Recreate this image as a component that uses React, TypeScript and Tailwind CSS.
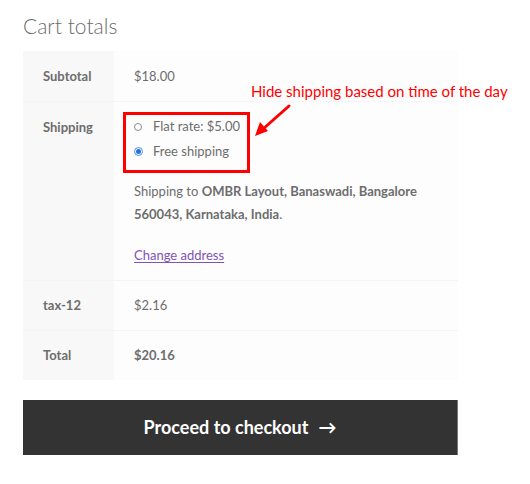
import React from "react";

export default function App() {
  const font = { fontFamily: "Lato, 'Noto Sans', sans-serif" };
  return (
    <div className="relative w-[530px] h-[484px] bg-white" style={font}>
      <div className="pl-[23px] pt-[9px] w-[458px]">
        <h2 className="text-[21px] leading-[34px] font-light text-[#6d6d6d] mb-[8px]">Cart totals</h2>
        <div className="text-[13px] text-[#6d6d6d]">
          <div className="flex border-b border-[#f5f5f5]">
            <div className="w-[91px] shrink-0 bg-[#f8f8f8] pl-[20px] py-[13px] leading-[24px] font-bold">Subtotal</div>
            <div className="flex-1 bg-[#fdfdfd] pl-[20px] py-[13px] leading-[24px]">$18.00</div>
          </div>
          <div className="flex border-b border-[#f5f5f5]">
            <div className="w-[91px] shrink-0 bg-[#f8f8f8] pl-[20px] py-[13px] leading-[24px] font-bold">Shipping</div>
            <div className="flex-1 bg-[#fdfdfd] pl-[20px] pt-[12px] pb-[13px]">
              <div className="relative">
                <div className="absolute left-[-11px] top-[-2px] w-[127px] h-[61px] border-[3px] border-[#ff0000]" />
                <div className="flex items-center h-[25px]">
                  <span className="w-[8px] h-[8px] rounded-full border border-[#8a8a8a] bg-white" />
                  <span className="ml-[11px]">Flat rate: $5.00</span>
                </div>
                <div className="flex items-center h-[25px]">
                  <span className="w-[9px] h-[9px] rounded-full border border-[#4a90e2] bg-white flex items-center justify-center">
                    <span className="w-[5px] h-[5px] rounded-full bg-[#1a73e8]" />
                  </span>
                  <span className="ml-[10px]">Free shipping</span>
                </div>
              </div>
              <p className="mt-[16px] leading-[23px]">
                Shipping to <strong className="font-bold">OMBR Layout, Banaswadi, Bangalore 560043, Karnataka, India</strong>.
              </p>
              <p className="mt-[18px] leading-[23px]">
                <span className="text-[#7f54b3] underline underline-offset-2">Change address</span>
              </p>
            </div>
          </div>
          <div className="flex border-b border-[#f5f5f5]">
            <div className="w-[91px] shrink-0 bg-[#f8f8f8] pl-[20px] py-[13px] leading-[23px] font-bold">tax-12</div>
            <div className="flex-1 bg-[#fdfdfd] pl-[20px] py-[13px] leading-[23px]">$2.16</div>
          </div>
          <div className="flex">
            <div className="w-[91px] shrink-0 bg-[#f8f8f8] pl-[20px] py-[13px] leading-[23px] font-bold">Total</div>
            <div className="flex-1 bg-[#fdfdfd] pl-[20px] py-[13px] leading-[23px] font-bold">$20.16</div>
          </div>
        </div>
        <div className="mt-[20px] h-[55px] bg-[#333333] border-r border-[#777] flex items-center justify-center text-white text-[18px] font-bold">
          <span>Proceed to checkout</span>
          <span className="ml-[10px]">&#8594;</span>
        </div>
      </div>
      <div className="absolute left-[251px] top-[81px] text-[15px] leading-[20px] text-[#ff0000] whitespace-nowrap" style={{ fontFamily: "Lato, sans-serif" }}>
        Hide shipping based on time of the day
      </div>
      <svg className="absolute left-0 top-0" width="530" height="484" style={{ pointerEvents: "none" }}>
        <line x1="289" y1="106" x2="263" y2="129" stroke="#ff0000" strokeWidth="3" strokeLinecap="round" />
        <polygon points="255,136 260,122 268,131" fill="#ff0000" />
      </svg>
    </div>
  );
}
